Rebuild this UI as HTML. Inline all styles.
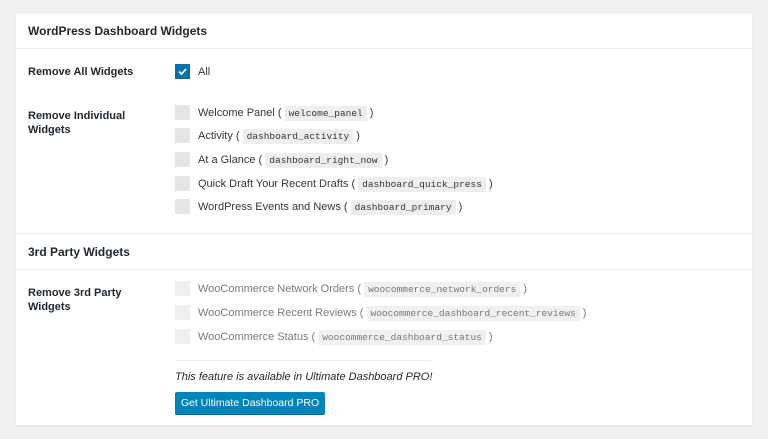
<!DOCTYPE html>
<html><head><style>
body{margin:0;background:#f1f1f1;font-family:"Liberation Sans",sans-serif;color:#23282d;width:768px;height:439px;position:relative;overflow:hidden}
.card{position:absolute;left:16px;top:14px;width:736px;height:411px;background:#fff;box-shadow:0 1px 2px rgba(0,0,0,.08)}
.a{position:absolute;white-space:nowrap}
.h{font-weight:bold;font-size:12px;left:12px}
.l{font-weight:bold;font-size:11px;left:12px;line-height:14px}
.hr{position:absolute;left:0;width:736px;height:1px;background:#eee}
.cb{position:absolute;left:159px;width:15px;height:15px;background:#e6e6e6}
.t{position:absolute;left:182px;font-size:11px;white-space:nowrap;color:#32373c}
code{font-family:"Liberation Mono",monospace;font-size:9.5px;background:#eee;padding:2px 4px;color:#333}
.g .cb{background:#f0f0f0}.g .t{color:#7a7a7a}.g code{color:#777;background:#f0f0f0}
</style></head><body>
<div class="card">
<div class="a h" style="top:10px">WordPress Dashboard Widgets</div>
<div class="hr" style="top:34px"></div>
<div class="a l" style="top:51px">Remove All Widgets</div>
<div class="cb" style="top:50px;background:#0073aa"><svg width="15" height="15"><path d="M4 7.5l2.5 2.5 4.5-5" stroke="#fff" stroke-width="1.8" fill="none"/></svg></div>
<div class="t" style="top:52px">All</div>
<div class="a l" style="top:95px">Remove Individual<br>Widgets</div>
<div class="cb" style="top:91px"></div><div class="t" style="top:93px">Welcome Panel ( <code>welcome_panel</code> )</div>
<div class="cb" style="top:114px"></div><div class="t" style="top:116px">Activity ( <code>dashboard_activity</code> )</div>
<div class="cb" style="top:138px"></div><div class="t" style="top:140px">At a Glance ( <code>dashboard_right_now</code> )</div>
<div class="cb" style="top:162px"></div><div class="t" style="top:164px">Quick Draft Your Recent Drafts ( <code>dashboard_quick_press</code> )</div>
<div class="cb" style="top:185px"></div><div class="t" style="top:187px">WordPress Events and News ( <code>dashboard_primary</code> )</div>
<div class="hr" style="top:219px"></div>
<div class="a h" style="top:231px">3rd Party Widgets</div>
<div class="hr" style="top:255px"></div>
<div class="a l" style="top:272px">Remove 3rd Party<br>Widgets</div>
<div class="g">
<div class="cb" style="top:267px"></div><div class="t" style="top:269px">WooCommerce Network Orders ( <code>woocommerce_network_orders</code> )</div>
<div class="cb" style="top:291px"></div><div class="t" style="top:293px">WooCommerce Recent Reviews ( <code>woocommerce_dashboard_recent_reviews</code> )</div>
<div class="cb" style="top:315px"></div><div class="t" style="top:317px">WooCommerce Status ( <code>woocommerce_dashboard_status</code> )</div>
</div>
<div style="position:absolute;left:159px;top:346px;width:256px;height:1px;background:#eee"></div>
<div class="t" style="left:159px;top:357px;font-style:italic;color:#23282d">This feature is available in Ultimate Dashboard PRO!</div>
<div style="position:absolute;left:159px;top:378px;width:150px;height:22px;background:#0085ba;border-radius:2px;color:#fff;font-size:10.5px;line-height:22px;text-align:center;box-shadow:0 1px 0 #006799">Get Ultimate Dashboard PRO</div>
</div>
</body></html>
